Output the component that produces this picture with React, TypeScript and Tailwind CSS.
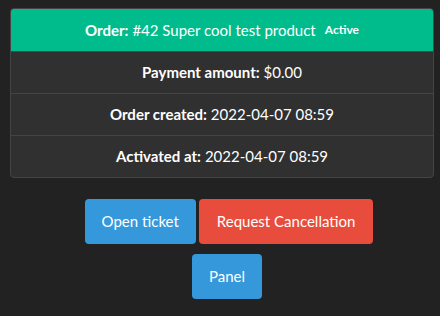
export default function App() {
  const rows = [
    { label: "Payment amount:", value: "$0.00" },
    { label: "Order created:", value: "2022-04-07 08:59" },
    { label: "Activated at:", value: "2022-04-07 08:59" },
  ];

  return (
    <main
      className="min-h-screen bg-[#222222] text-white pt-2"
      style={{ fontFamily: "Lato, 'Noto Sans', sans-serif" }}
    >
      {/* Order card */}
      <div className="ml-[10px] w-[424px] rounded-[4px] border border-[#444444] bg-[#303030] overflow-hidden">
        <div className="h-[42px] bg-[#00bc8c] flex items-center justify-center text-[15px]">
          <span className="font-bold">Order:</span>
          <span className="ml-1">#42 Super cool test product</span>
          <span className="ml-[9px] text-[12px] font-bold">Active</span>
        </div>
        {rows.map((r) => (
          <div
            key={r.label}
            className="h-[42px] border-t border-[#444444] flex items-center justify-center text-[15px]"
          >
            <span className="font-bold">{r.label}</span>
            <span className="ml-1">{r.value}</span>
          </div>
        ))}
      </div>

      {/* Actions */}
      <div className="mt-[21px] pl-[18px] flex justify-center gap-[3px]">
        <button className="h-[45px] px-[17px] rounded-[4px] bg-[#3498db] text-[15px]">Open ticket</button>
        <button className="h-[45px] px-[18px] rounded-[4px] bg-[#e74c3c] text-[15px]">Request Cancellation</button>
      </div>
      <div className="mt-[10px] pl-[14px] flex justify-center">
        <button className="h-[45px] px-[17px] rounded-[4px] bg-[#3498db] text-[15px]">Panel</button>
      </div>
    </main>
  );
}
